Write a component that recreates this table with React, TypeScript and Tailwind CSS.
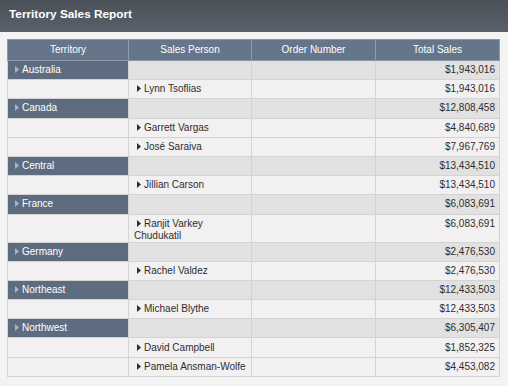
import React from "react";

type Row =
  | { kind: "group"; name: string; total: string }
  | { kind: "person"; name: string; total: string; tall?: boolean };

const rows: Row[] = [
  { kind: "group", name: "Australia", total: "$1,943,016" },
  { kind: "person", name: "Lynn Tsoflias", total: "$1,943,016" },
  { kind: "group", name: "Canada", total: "$12,808,458" },
  { kind: "person", name: "Garrett Vargas", total: "$4,840,689" },
  { kind: "person", name: "José Saraiva", total: "$7,967,769" },
  { kind: "group", name: "Central", total: "$13,434,510" },
  { kind: "person", name: "Jillian Carson", total: "$13,434,510" },
  { kind: "group", name: "France", total: "$6,083,691" },
  { kind: "person", name: "Ranjit Varkey Chudukatil", total: "$6,083,691", tall: true },
  { kind: "group", name: "Germany", total: "$2,476,530" },
  { kind: "person", name: "Rachel Valdez", total: "$2,476,530" },
  { kind: "group", name: "Northeast", total: "$12,433,503" },
  { kind: "person", name: "Michael Blythe", total: "$12,433,503" },
  { kind: "group", name: "Northwest", total: "$6,305,407" },
  { kind: "person", name: "David Campbell", total: "$1,852,325" },
  { kind: "person", name: "Pamela Ansman-Wolfe", total: "$4,453,082" },
];

function Tri({ color }: { color: string }) {
  return (
    <svg width="4" height="7" viewBox="0 0 4 7" className="inline-block mr-[3px] align-[0px]">
      <path d="M0 0 L4 3.5 L0 7 Z" fill={color} />
    </svg>
  );
}

const cell = "border border-[#d3d3d3] p-0";

export default function App() {
  return (
    <div
      className="w-[508px] h-[386px] bg-[#f4f3f4] overflow-hidden"
      style={{ fontFamily: '"Liberation Sans", Arial, sans-serif' }}
    >
      <div className="h-[32px] bg-gradient-to-b from-[#4b5159] to-[#59606a] flex items-center pl-[9px] pb-[2px]">
        <span className="text-white font-bold text-[11.8px]">Territory Sales Report</span>
      </div>
      <div className="pt-[7px] pl-[7px]">
        <table className="border-collapse table-fixed w-[492px] text-[10px] leading-[12px] text-[#2e2e2e] border border-[#d3d3d3]">
          <colgroup>
            <col className="w-[121px]" />
            <col className="w-[123px]" />
            <col className="w-[124px]" />
            <col className="w-[124px]" />
          </colgroup>
          <thead>
            <tr className="h-[21px] bg-[#66768a] text-white">
              <th className="font-normal border border-[#8d99a8] p-0 text-center">Territory</th>
              <th className="font-normal border border-[#8d99a8] p-0 text-center">Sales Person</th>
              <th className="font-normal border border-[#8d99a8] p-0 text-center">Order Number</th>
              <th className="font-normal border border-[#8d99a8] p-0 text-center">Total Sales</th>
            </tr>
          </thead>
          <tbody>
            {rows.map((r, i) =>
              r.kind === "group" ? (
                <tr key={i} className="h-[19.2px] bg-[#e1e1e1]">
                  <td className="bg-[#5e6c7f] text-white pl-[7px] pr-0 py-0 border-b border-[#d3d3d3] align-middle">
                    <Tri color="#aab3bf" />
                    {r.name}
                  </td>
                  <td className={cell}></td>
                  <td className={cell}></td>
                  <td className={`${cell} text-right pr-[4px] align-middle`}>{r.total}</td>
                </tr>
              ) : r.tall ? (
                <tr key={i} className="h-[27px] bg-[#f2f0f1]">
                  <td className={cell}></td>
                  <td className={`${cell} pl-[5px] align-top pt-[3px]`}>
                    <span className="pl-[3px]">
                      <Tri color="#2e2e2e" />
                    </span>
                    {r.name}
                  </td>
                  <td className={cell}></td>
                  <td className={`${cell} text-right pr-[4px] align-top pt-[3px]`}>{r.total}</td>
                </tr>
              ) : (
                <tr key={i} className="h-[19.2px] bg-[#f2f0f1]">
                  <td className={cell}></td>
                  <td className={`${cell} pl-[5px] align-middle`}>
                    <span className="pl-[3px]">
                      <Tri color="#2e2e2e" />
                    </span>
                    {r.name}
                  </td>
                  <td className={cell}></td>
                  <td className={`${cell} text-right pr-[4px] align-middle`}>{r.total}</td>
                </tr>
              )
            )}
          </tbody>
        </table>
      </div>
    </div>
  );
}
